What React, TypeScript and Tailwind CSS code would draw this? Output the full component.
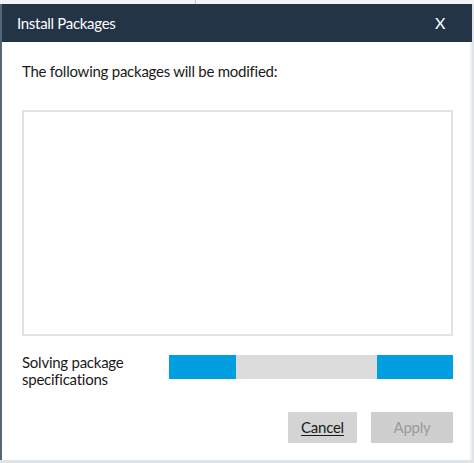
export default function App() {
  return (
    <div
      className="w-[474px] h-[463px] bg-[#dfe4e8] flex flex-col overflow-hidden"
      style={{ fontFamily: 'Lato, "Noto Sans", sans-serif' }}
    >
      <div className="h-[4px] bg-[#f2f3f4] flex shrink-0">
        <div className="w-[196px] border-r border-[#c8c8c8]" />
      </div>
      <div className="flex-1 mr-[2px] mb-[3px] border-l-2 border-[#53667a] bg-white flex flex-col">
        <div className="h-[38px] bg-[#243447] flex items-center justify-between pl-[15px] pr-[27px] text-white text-[15px] tracking-[-0.3px]">
          <span>Install Packages</span>
          <span className="text-[16px]">X</span>
        </div>
        <div className="flex-1 border-r-2 border-[#eef0f2] flex flex-col pl-[20px] pr-[17px] tracking-[-0.25px]">
          <p className="mt-[18px] text-[15px] text-[#1a1a1a] leading-[22px]">
            The following packages will be modified:
          </p>
          <div className="mt-[28px] h-[226px] border-2 border-[#e2e2e2]" />
          <div className="mt-[18px] flex items-start">
            <p className="w-[147px] text-[15px] leading-[17px] text-[#1a1a1a]">
              Solving package
              <br />
              specifications
            </p>
            <div className="mt-[1px] flex-1 h-[24px] bg-[#dcdcdc] flex justify-between">
              <div className="w-[67px] bg-[#019fe0]" />
              <div className="w-[76px] bg-[#019fe0]" />
            </div>
          </div>
          <div className="mt-[24px] flex justify-end gap-[14px]">
            <button className="w-[69px] h-[31px] bg-[#d4d4d4] text-[15px] text-[#1a1a1a] underline underline-offset-2">
              Cancel
            </button>
            <button className="w-[82px] h-[31px] bg-[#cfcfcf] text-[15px] text-[#9a9a9a]">
              Apply
            </button>
          </div>
        </div>
      </div>
    </div>
  );
}
